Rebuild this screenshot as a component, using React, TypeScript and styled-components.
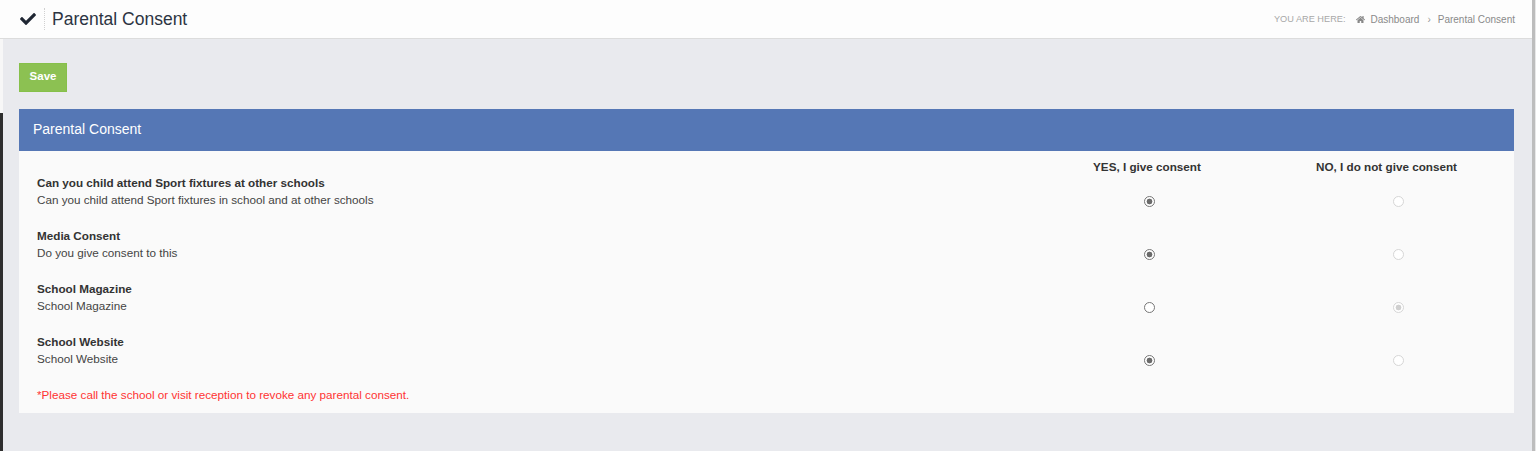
import React, { FC } from "react";
import styled, { createGlobalStyle } from "styled-components";
import { FaCheck, FaHome } from "react-icons/fa";

interface Question {
  title: string;
  description: string;
  consent: boolean;
}

const questions: Question[] = [
  {
    title: "Can you child attend Sport fixtures at other schools",
    description: "Can you child attend Sport fixtures in school and at other schools",
    consent: true,
  },
  { title: "Media Consent", description: "Do you give consent to this", consent: true },
  { title: "School Magazine", description: "School Magazine", consent: false },
  { title: "School Website", description: "School Website", consent: true },
];

const GlobalStyle = createGlobalStyle`
  html, body {
    margin: 0;
    padding: 0;
    height: 451px;
    overflow: hidden;
    background: #e9eaee;
    font-family: "Liberation Sans", Arial, sans-serif;
  }
`;

const App: FC = () => {
  return (
    <>
      <GlobalStyle />
      <StPage>
        <StEdge />
        <StMain>
          <StTopBar>
            <StPageTitle>
              <FaCheck className="Icon" />
              <span className="Divider" />
              <h1>Parental Consent</h1>
            </StPageTitle>
            <StCrumbs>
              <span className="Here">YOU ARE HERE:</span>
              <FaHome className="Home" />
              <span className="Link">Dashboard</span>
              <span className="Sep">›</span>
              <span>Parental Consent</span>
            </StCrumbs>
          </StTopBar>

          <StContent>
            <StSaveButton>Save</StSaveButton>

            <StPanel>
              <StPanelHeading>Parental Consent</StPanelHeading>
              <StPanelBody>
                <StGrid>
                  <div />
                  <StColumnHead $pad={4}>YES, I give consent</StColumnHead>
                  <StColumnHead $pad={9}>NO, I do not give consent</StColumnHead>

                  {questions.map((q, i) => (
                    <React.Fragment key={q.title}>
                      <StQuestion $first={i === 0}>
                        <div className="Title">{q.title}</div>
                        <div className="Desc">{q.description}</div>
                      </StQuestion>
                      <StRadioCell $first={i === 0}>
                        <StRadio $checked={q.consent} />
                      </StRadioCell>
                      <StRadioCell $first={i === 0} $shift>
                        <StRadio $checked={!q.consent} $faded />
                      </StRadioCell>
                    </React.Fragment>
                  ))}
                </StGrid>
                <StNote>*Please call the school or visit reception to revoke any parental consent.</StNote>
              </StPanelBody>
            </StPanel>
          </StContent>
        </StMain>
        <StScrollbar />
      </StPage>
    </>
  );
};

export default App;

const StPage = styled.div`
  display: flex;
  height: 451px;
  width: 1536px;
`;

const StEdge = styled.div`
  width: 3px;
  flex-shrink: 0;
  background: linear-gradient(#f7f7f7 113px, #2e2e2e 113px);
`;

const StScrollbar = styled.div`
  width: 4px;
  flex-shrink: 0;
  background: linear-gradient(90deg, #bdbdbd 3px, #e8e8e8 3px);
`;

const StMain = styled.div`
  flex: 1;
  display: flex;
  flex-direction: column;
  background: #e9eaee;
`;

const StTopBar = styled.div`
  height: 38px;
  background: #fdfdfd;
  border-bottom: 1px solid #dcdcdc;
  margin-left: -3px;
  padding: 0 17px 0 20px;
  display: flex;
  align-items: center;
  justify-content: space-between;
`;

const StPageTitle = styled.div`
  display: flex;
  align-items: center;

  .Icon {
    font-size: 16px;
    color: #1f2633;
  }

  .Divider {
    width: 0;
    height: 22px;
    border-left: 1px dotted #d0d0d0;
    margin: 0 7px 0 8px;
  }

  h1 {
    margin: 0;
    font-size: 17.5px;
    font-weight: 400;
    color: #2c3442;
  }
`;

const StCrumbs = styled.div`
  display: flex;
  align-items: center;
  font-size: 10px;
  color: #8a8a8a;

  .Here {
    font-size: 9.2px;
    color: #a8a8a8;
    margin-right: 11px;
  }

  .Home {
    font-size: 9px;
    color: #888;
    margin-right: 5px;
  }

  .Sep {
    margin: 0 7px 0 8px;
    color: #999;
  }
`;

const StContent = styled.div`
  padding: 24px 18px 0 16px;
`;

const StSaveButton = styled.button`
  display: block;
  width: 48px;
  height: 29px;
  border: 1px solid #86c04a;
  background: #8cc152;
  color: #fff;
  font-family: "Liberation Sans", Arial, sans-serif;
  font-size: 11.5px;
  font-weight: 700;
  padding: 0 0 4px;
  cursor: pointer;
`;

const StPanel = styled.div`
  margin-top: 17px;
  background: #fafafa;
`;

const StPanelHeading = styled.div`
  height: 42px;
  background: #5577b5;
  color: #fff;
  font-size: 14px;
  line-height: 41px;
  padding-left: 14px;
`;

const StPanelBody = styled.div`
  padding: 8px 0 10px 18px;
  font-size: 11.7px;
  line-height: 16px;
  color: #333;
`;

const StGrid = styled.div`
  display: grid;
  grid-template-columns: 1fr 238px 246px;
`;

const StColumnHead = styled.div<{ $pad: number }>`
  text-align: center;
  font-weight: 700;
  color: #333;
  padding-right: ${(p) => p.$pad}px;
`;

const StQuestion = styled.div<{ $first?: boolean }>`
  padding-top: ${(p) => (p.$first ? "0" : "20px")};

  .Title {
    font-weight: 700;
    color: #333;
  }

  .Desc {
    margin-top: 1px;
    color: #444;
  }
`;

const StRadioCell = styled.div<{ $first?: boolean; $shift?: boolean }>`
  display: flex;
  justify-content: center;
  padding-top: ${(p) => (p.$first ? "21px" : "41px")};
  padding-left: ${(p) => (p.$shift ? "14px" : "0")};
`;

const StRadio = styled.span<{ $checked?: boolean; $faded?: boolean }>`
  box-sizing: border-box;
  width: 11px;
  height: 11px;
  border-radius: 50%;
  border: 1px solid ${(p) => (p.$faded ? "#d6d6d6" : "#767676")};
  background: ${(p) =>
    p.$checked
      ? `radial-gradient(circle, ${p.$faded ? "#cfcfcf" : "#6a6a6a"} 2.6px, #fff 3.2px)`
      : "#fff"};
`;

const StNote = styled.div`
  margin-top: 20px;
  color: #ff3333;
`;
